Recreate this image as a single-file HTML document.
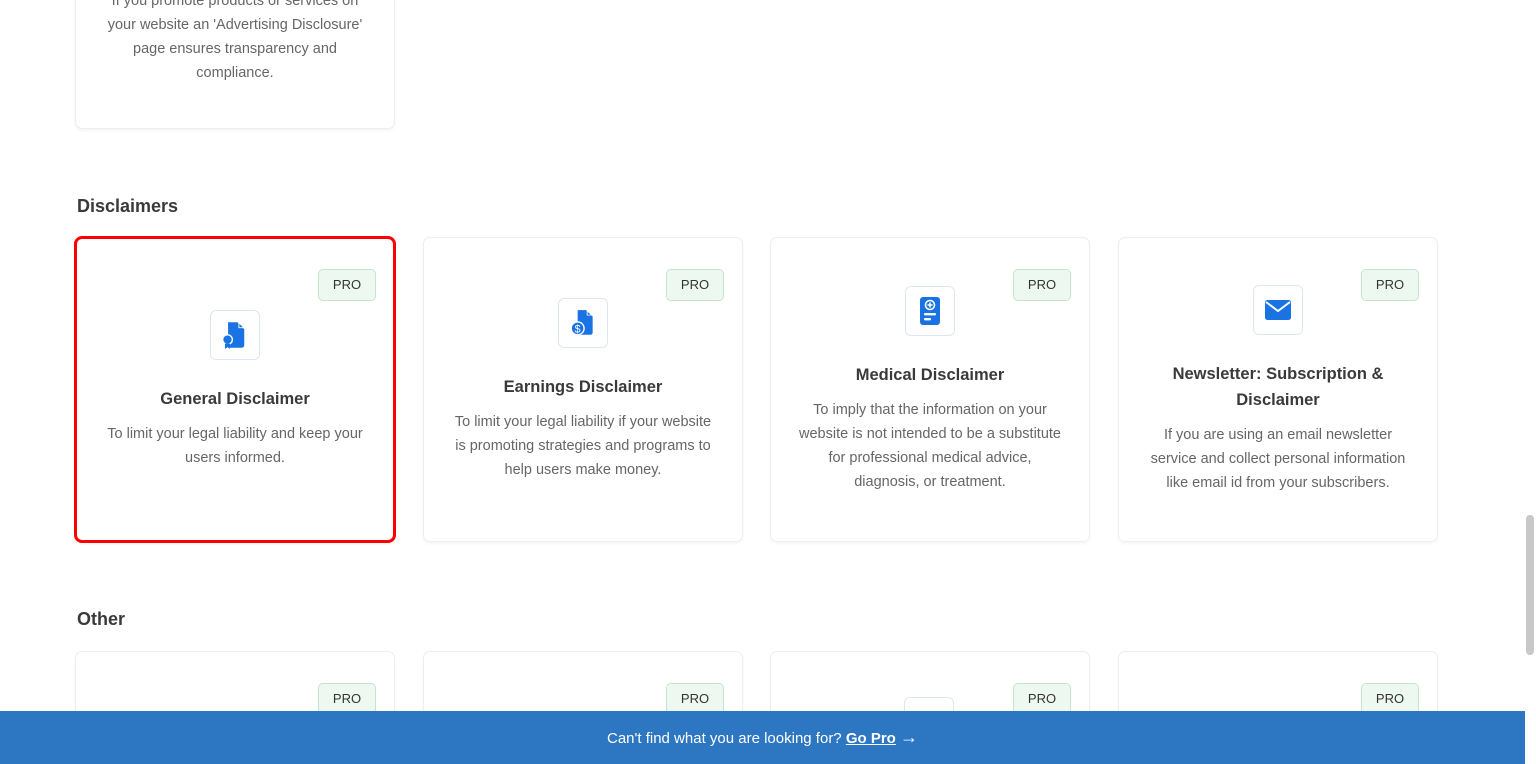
<!DOCTYPE html>
<html><head><meta charset="utf-8"><style>
*{box-sizing:border-box;margin:0;padding:0}
html,body{width:1536px;height:764px;overflow:hidden}
body{background:#fff;font-family:"Liberation Sans",Arial,sans-serif;position:relative}
.card{position:absolute;width:318px;background:#fff;border-radius:6px;box-shadow:0 0 0 1px #eceef1,0 2px 4px rgba(0,0,0,.06);display:flex;flex-direction:column;align-items:center;justify-content:center;text-align:center}
.pro{position:absolute;top:31px;right:18px;width:58px;height:32px;background:#edf9f0;border:1px solid #c3e6cb;border-radius:5px;font-size:13px;color:#333;line-height:30px;text-align:center}
.ic{width:50px;height:50px;border:1px solid #dde6f4;border-radius:6px;display:flex;align-items:center;justify-content:center}
.t{margin-top:26px;font-size:16.5px;font-weight:bold;color:#3a3a3a;line-height:26px;white-space:nowrap}
.d{margin-top:10px;font-size:14.5px;color:#666;line-height:24px;white-space:nowrap}
h2{position:absolute;left:77px;font-size:18px;font-weight:bold;color:#3a3a3a}
.foot{position:absolute;left:0;top:711px;width:1525px;height:53px;background:#2d76c2;color:#fff;font-size:15px;text-align:center;line-height:52px}
.foot u{font-weight:bold}
</style></head><body>

<div class="card" style="left:76px;top:-60px;height:188px;justify-content:flex-start;padding-top:49px">
<div class="d" style="margin:0">If you promote products or services on<br>your website an 'Advertising Disclosure'<br>page ensures transparency and<br>compliance.</div></div>

<h2 style="top:196px">Disclaimers</h2>

<div class="card" style="left:76px;top:238px;height:303px;outline:3px solid #f00;outline-offset:-1px">
<div class="pro">PRO</div>
<div class="ic"><svg width="28" height="30" viewBox="0 0 24 26"><path d="M6 2h8l6 6v14a2 2 0 0 1-2 2H8a2 2 0 0 1-2-2z" fill="#1a73e3"/><path d="M15 2.5l4.5 4.5H15z" fill="#fff"/><path d="M15.8 3.3l3 3h-3z" fill="#1a73e3"/><circle cx="5.5" cy="17" r="4.2" fill="#1a73e3" stroke="#fff" stroke-width="1.2"/><path d="M3.3 20.5v4.5l2.2-1.4 2.2 1.4v-4.5" fill="#1a73e3"/></svg></div>
<div class="t">General Disclaimer</div>
<div class="d">To limit your legal liability and keep your<br>users informed.</div></div>

<div class="card" style="left:424px;top:238px;height:303px">
<div class="pro">PRO</div>
<div class="ic"><svg width="26" height="30" viewBox="0 0 24 28"><path d="M7 2h8l6 6v15a2 2 0 0 1-2 2H9a2 2 0 0 1-2-2z" fill="#1a73e3"/><path d="M15.5 2.5l4.5 4.5h-4.5z" fill="#fff"/><path d="M16.3 3.5l2.8 2.8h-2.8z" fill="#1a73e3"/><circle cx="7" cy="19" r="6" fill="#1a73e3" stroke="#fff" stroke-width="1.3"/><text x="7" y="23" font-size="10" fill="#fff" text-anchor="middle" font-family="Liberation Sans">$</text></svg></div>
<div class="t">Earnings Disclaimer</div>
<div class="d">To limit your legal liability if your website<br>is promoting strategies and programs to<br>help users make money.</div></div>

<div class="card" style="left:771px;top:238px;height:303px">
<div class="pro">PRO</div>
<div class="ic"><svg width="22" height="30" viewBox="0 0 22 30"><rect x="1" y="1" width="20" height="28" rx="3" fill="#1a73e3"/><circle cx="11" cy="9" r="4.5" fill="none" stroke="#fff" stroke-width="1.6"/><path d="M11 6.5v5M8.5 9h5" stroke="#fff" stroke-width="1.6"/><rect x="5" y="17" width="12" height="2.4" rx="1" fill="#fff"/><rect x="5" y="22" width="7" height="2.4" rx="1" fill="#fff"/></svg></div>
<div class="t">Medical Disclaimer</div>
<div class="d">To imply that the information on your<br>website is not intended to be a substitute<br>for professional medical advice,<br>diagnosis, or treatment.</div></div>

<div class="card" style="left:1119px;top:238px;height:303px">
<div class="pro">PRO</div>
<div class="ic"><svg width="28" height="22" viewBox="0 0 28 22"><rect x="1" y="1" width="26" height="20" rx="2.5" fill="#1a73e3"/><path d="M2 3l12 9 12-9" fill="none" stroke="#fff" stroke-width="2"/></svg></div>
<div class="t">Newsletter: Subscription &amp;<br>Disclaimer</div>
<div class="d">If you are using an email newsletter<br>service and collect personal information<br>like email id from your subscribers.</div></div>

<h2 style="top:609px">Other</h2>

<div class="card" style="left:76px;top:652px;height:112px;border-radius:6px 6px 0 0"><div class="pro">PRO</div></div>
<div class="card" style="left:424px;top:652px;height:112px;border-radius:6px 6px 0 0"><div class="pro">PRO</div></div>
<div class="card" style="left:771px;top:652px;height:112px;border-radius:6px 6px 0 0"><div class="pro">PRO</div><div style="position:absolute;left:133px;top:45px;width:50px;height:50px;border:1px solid #dde6f4;border-radius:6px"></div></div>
<div class="card" style="left:1119px;top:652px;height:112px;border-radius:6px 6px 0 0"><div class="pro">PRO</div></div>

<div class="foot">Can't find what you are looking for? <u>Go Pro</u> <span style="font-size:18px">&#8594;</span></div>
<div style="position:absolute;left:1526px;top:515px;width:8px;height:140px;background:#c8c8c8;border-radius:4px"></div>
</body></html>
